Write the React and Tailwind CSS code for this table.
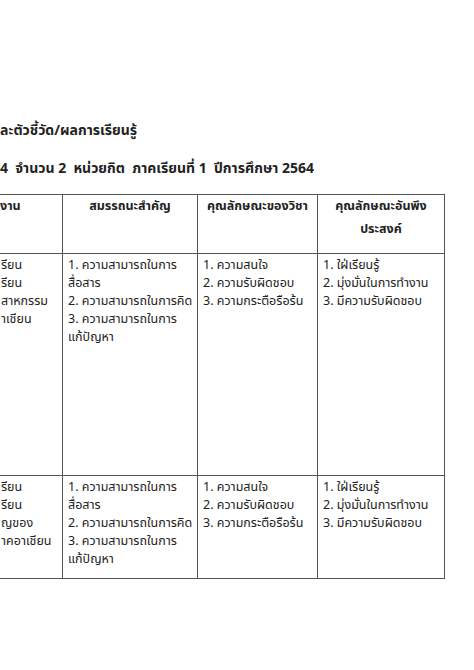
const font = { fontFamily: '"Noto Sans Thai", Tahoma, "Noto Sans", "DejaVu Sans", sans-serif' };

const competencies = [
  "1. ความสามารถในการ",
  "สื่อสาร",
  "2. ความสามารถในการคิด",
  "3. ความสามารถในการ",
  "แก้ปัญหา",
];
const subjectTraits = ["1. ความสนใจ", "2. ความรับผิดชอบ", "3. ความกระตือรือร้น"];
const desiredTraits = ["1. ใฝ่เรียนรู้", "2. มุ่งมั่นในการทำงาน", "3. มีความรับผิดชอบ"];

const rows = [
  { first: ["รียน", "รียน", "สาหกรรม", "าเชียน"], height: "h-[222px]" },
  { first: ["รียน", "รียน", "ญของ", "าคอาเชียน"], height: "h-[103px]" },
];

function Lines({ items }) {
  return (
    <div className="flex flex-col">
      {items.map((t, i) => (
        <div key={i} className="leading-[18px] whitespace-nowrap">
          {t}
        </div>
      ))}
    </div>
  );
}

export default function App() {
  return (
    <div
      className="w-[474px] h-[670px] bg-white text-[#222] overflow-hidden flex flex-col"
      style={font}
    >
      {/* Headings */}
      <div className="pt-[120px] flex flex-col gap-[16px] font-bold text-[14px]">
        <div className="leading-[22px] whitespace-nowrap">ละตัวชี้วัด/ผลการเรียนรู้</div>
        <div className="leading-[22px] whitespace-pre">
          {"4  จำนวน 2  หน่วยกิต  ภาคเรียนที่ 1  ปีการศึกษา 2564"}
        </div>
      </div>

      {/* Table */}
      <div className="mt-[14px] w-[445px] grid grid-cols-[62px_135px_120px_128px] text-[12.5px] border-t border-[#555]">
        {/* header */}
        <div className="h-[59px] border-b border-[#555] font-bold leading-[23px]">งาน</div>
        <div className="h-[59px] border-b border-l border-[#555] font-bold leading-[23px] text-center">
          สมรรถนะสำคัญ
        </div>
        <div className="h-[59px] border-b border-l border-[#555] font-bold leading-[23px] text-center">
          คุณลักษณะของวิชา
        </div>
        <div className="h-[59px] border-b border-l border-r border-[#555] font-bold leading-[23px] text-center">
          <div>คุณลักษณะอันพึง</div>
          <div>ประสงค์</div>
        </div>

        {rows.map((r, i) => (
          <div key={i} className="contents">
            <div className={`${r.height} border-b border-[#555] pt-[3px] pl-[1px]`}>
              <Lines items={r.first} />
            </div>
            <div className={`${r.height} border-b border-l border-[#555] pt-[3px] pl-[5px]`}>
              <Lines items={competencies} />
            </div>
            <div className={`${r.height} border-b border-l border-[#555] pt-[3px] pl-[5px]`}>
              <Lines items={subjectTraits} />
            </div>
            <div className={`${r.height} border-b border-l border-r border-[#555] pt-[3px] pl-[5px]`}>
              <Lines items={desiredTraits} />
            </div>
          </div>
        ))}
      </div>
    </div>
  );
}
